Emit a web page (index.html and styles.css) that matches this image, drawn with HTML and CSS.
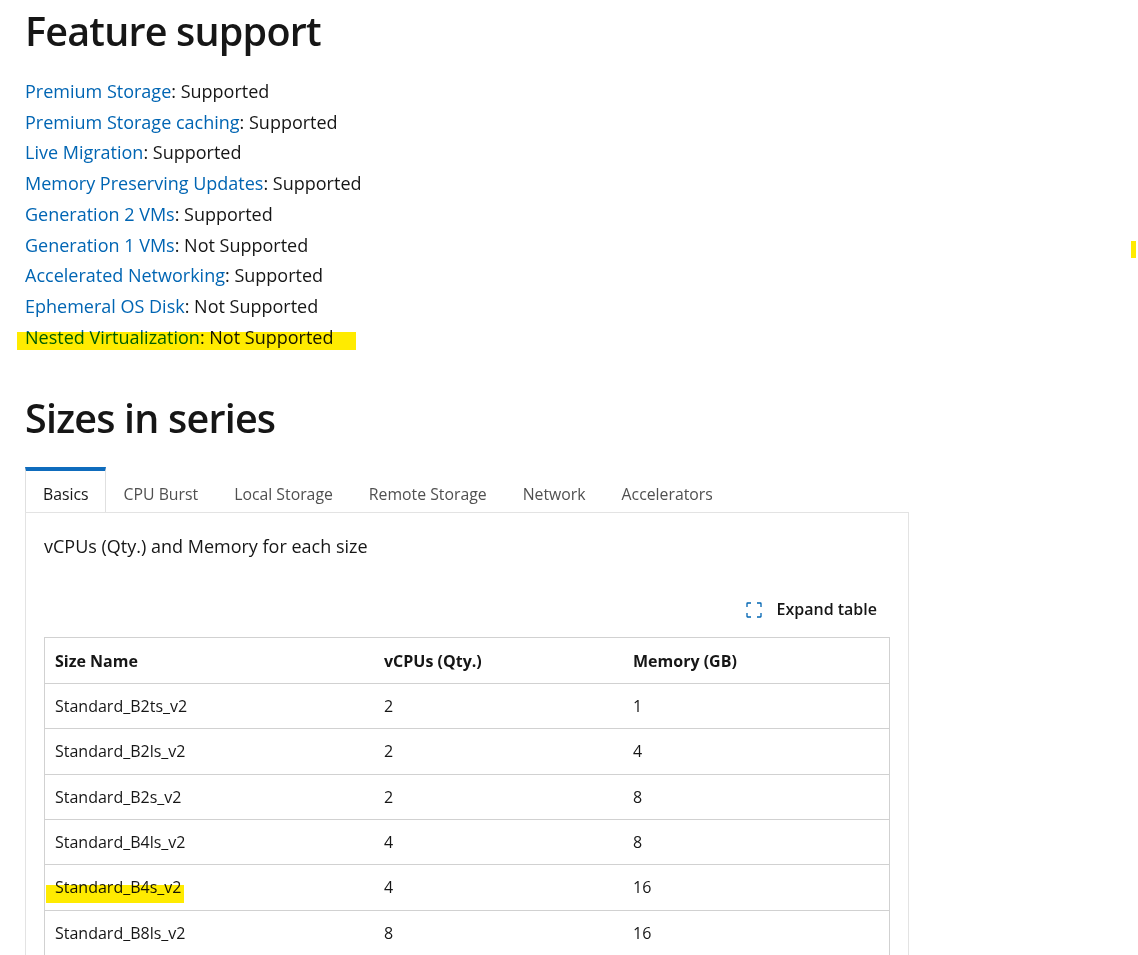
FILE: index.html
```html
<!DOCTYPE html>
<html lang="en">
<head>
<meta charset="utf-8">
<title>Feature support</title>
<link rel="stylesheet" href="styles.css">
</head>
<body>
<main class="content">
  <h2 class="heading heading-first">Feature support</h2>
  <ul class="features">
    <li><a href="#">Premium Storage</a>: Supported</li>
    <li><a href="#">Premium Storage caching</a>: Supported</li>
    <li><a href="#">Live Migration</a>: Supported</li>
    <li><a href="#">Memory Preserving Updates</a>: Supported</li>
    <li><a href="#">Generation 2 VMs</a>: Supported</li>
    <li><a href="#">Generation 1 VMs</a>: Not Supported</li>
    <li><a href="#">Accelerated Networking</a>: Supported</li>
    <li><a href="#">Ephemeral OS Disk</a>: Not Supported</li>
    <li><a href="#">Nested Virtualization</a>: Not Supported</li>
  </ul>

  <h2 class="heading heading-second">Sizes in series</h2>

  <div class="tabs">
    <div class="tablist">
      <span class="tab tab-active">Basics</span>
      <span class="tab">CPU Burst</span>
      <span class="tab">Local Storage</span>
      <span class="tab">Remote Storage</span>
      <span class="tab">Network</span>
      <span class="tab">Accelerators</span>
    </div>
    <div class="panel">
      <p class="panel-intro">vCPUs (Qty.) and Memory for each size</p>
      <div class="table-actions">
        <button class="expand-btn" type="button">
          <svg class="expand-icon" width="16" height="16" viewBox="0 0 16 16" fill="none" stroke="#0065b3" stroke-width="1.3">
            <path d="M1 5V1.5Q1 1 1.5 1H5"/>
            <path d="M11 1H14.5Q15 1 15 1.5V5"/>
            <path d="M15 11V14.5Q15 15 14.5 15H11"/>
            <path d="M5 15H1.5Q1 15 1 14.5V11"/>
          </svg>
          <span>Expand table</span>
        </button>
      </div>
      <table class="sizes">
        <thead>
          <tr><th class="col1">Size Name</th><th class="col2">vCPUs (Qty.)</th><th class="col3">Memory (GB)</th></tr>
        </thead>
        <tbody>
          <tr><td>Standard_B2ts_v2</td><td>2</td><td>1</td></tr>
          <tr><td>Standard_B2ls_v2</td><td>2</td><td>4</td></tr>
          <tr><td>Standard_B2s_v2</td><td>2</td><td>8</td></tr>
          <tr><td>Standard_B4ls_v2</td><td>4</td><td>8</td></tr>
          <tr><td>Standard_B4s_v2</td><td>4</td><td>16</td></tr>
          <tr><td>Standard_B8ls_v2</td><td>8</td><td>16</td></tr>
          <tr><td>Standard_B8s_v2</td><td>8</td><td>32</td></tr>
          <tr><td>Standard_B16ls_v2</td><td>16</td><td>32</td></tr>
        </tbody>
      </table>
    </div>
  </div>
</main>

<div class="marker marker-nested"></div>
<div class="marker marker-edge"></div>
<div class="marker marker-b4s"></div>
</body>
</html>
```

FILE: styles.css
```css
html, body {
  margin: 0;
  padding: 0;
  background: #ffffff;
}

body {
  font-family: "Open Sans", "Noto Sans", "Liberation Sans", sans-serif;
  color: #161616;
  position: relative;
  overflow: hidden;
}

.content {
  padding-left: 25px;
  width: 884px;
}

.heading {
  margin: 0;
  font-size: 39.5px;
  line-height: 53px;
  font-weight: 600;
  letter-spacing: -0.8px;
  color: #161616;
}

.heading-first {
  margin-top: 5px;
}

.heading-second {
  margin-top: 40px;
}

.features {
  list-style: none;
  margin: 18px 0 0 0;
  padding: 0;
  font-size: 18px;
  line-height: 30.72px;
}

.features a {
  color: #0065b3;
  text-decoration: none;
}

.tabs {
  margin-top: 22px;
}

.tablist {
  display: flex;
  height: 45px;
}

.tab {
  box-sizing: border-box;
  height: 45px;
  padding: 11px 18px 0 18px;
  font-size: 15.8px;
  line-height: 25.2px;
  color: #505050;
  border-top: 4px solid transparent;
}

.tab-active {
  color: #161616;
  border-top-color: #0f6cbd;
  border-left: 1px solid #e0e0e0;
  border-right: 1px solid #e0e0e0;
  padding-left: 17px;
  padding-right: 16px;
}

.panel {
  border: 1px solid #e3e3e3;
  padding: 18px 18px 40px 18px;
}

.panel-intro {
  margin: 0;
  font-size: 18px;
  line-height: 30.72px;
}

.table-actions {
  display: flex;
  justify-content: flex-end;
  margin-top: 35px;
  margin-bottom: 15px;
}

.expand-btn {
  display: flex;
  align-items: center;
  gap: 14px;
  padding: 0 13px 0 0;
  margin: 0;
  border: none;
  background: none;
  font-family: inherit;
  font-size: 16px;
  line-height: 25.2px;
  font-weight: 600;
  color: #161616;
}

.expand-icon {
  display: block;
}

.sizes {
  width: 846px;
  border-collapse: collapse;
  border: 1px solid #d1d1d1;
  font-size: 16px;
  line-height: 25.2px;
}

.sizes th,
.sizes td {
  text-align: left;
  padding: 10.1px 10px 9.1px 10px;
  border-bottom: 1px solid #d1d1d1;
  vertical-align: top;
}

.sizes th {
  font-weight: 700;
  padding-top: 10.6px;
  padding-bottom: 8.6px;
}

.col1 { width: 309px; }
.col2 { width: 229px; }
.col3 { width: auto; }

.marker {
  position: absolute;
  background: #ffeb00;
  mix-blend-mode: multiply;
}

.marker-nested {
  left: 17px;
  top: 332px;
  width: 339px;
  height: 18px;
}

.marker-edge {
  left: 1131px;
  top: 241px;
  width: 5px;
  height: 17px;
}

.marker-b4s {
  left: 46px;
  top: 885px;
  width: 138px;
  height: 18px;
}
```
